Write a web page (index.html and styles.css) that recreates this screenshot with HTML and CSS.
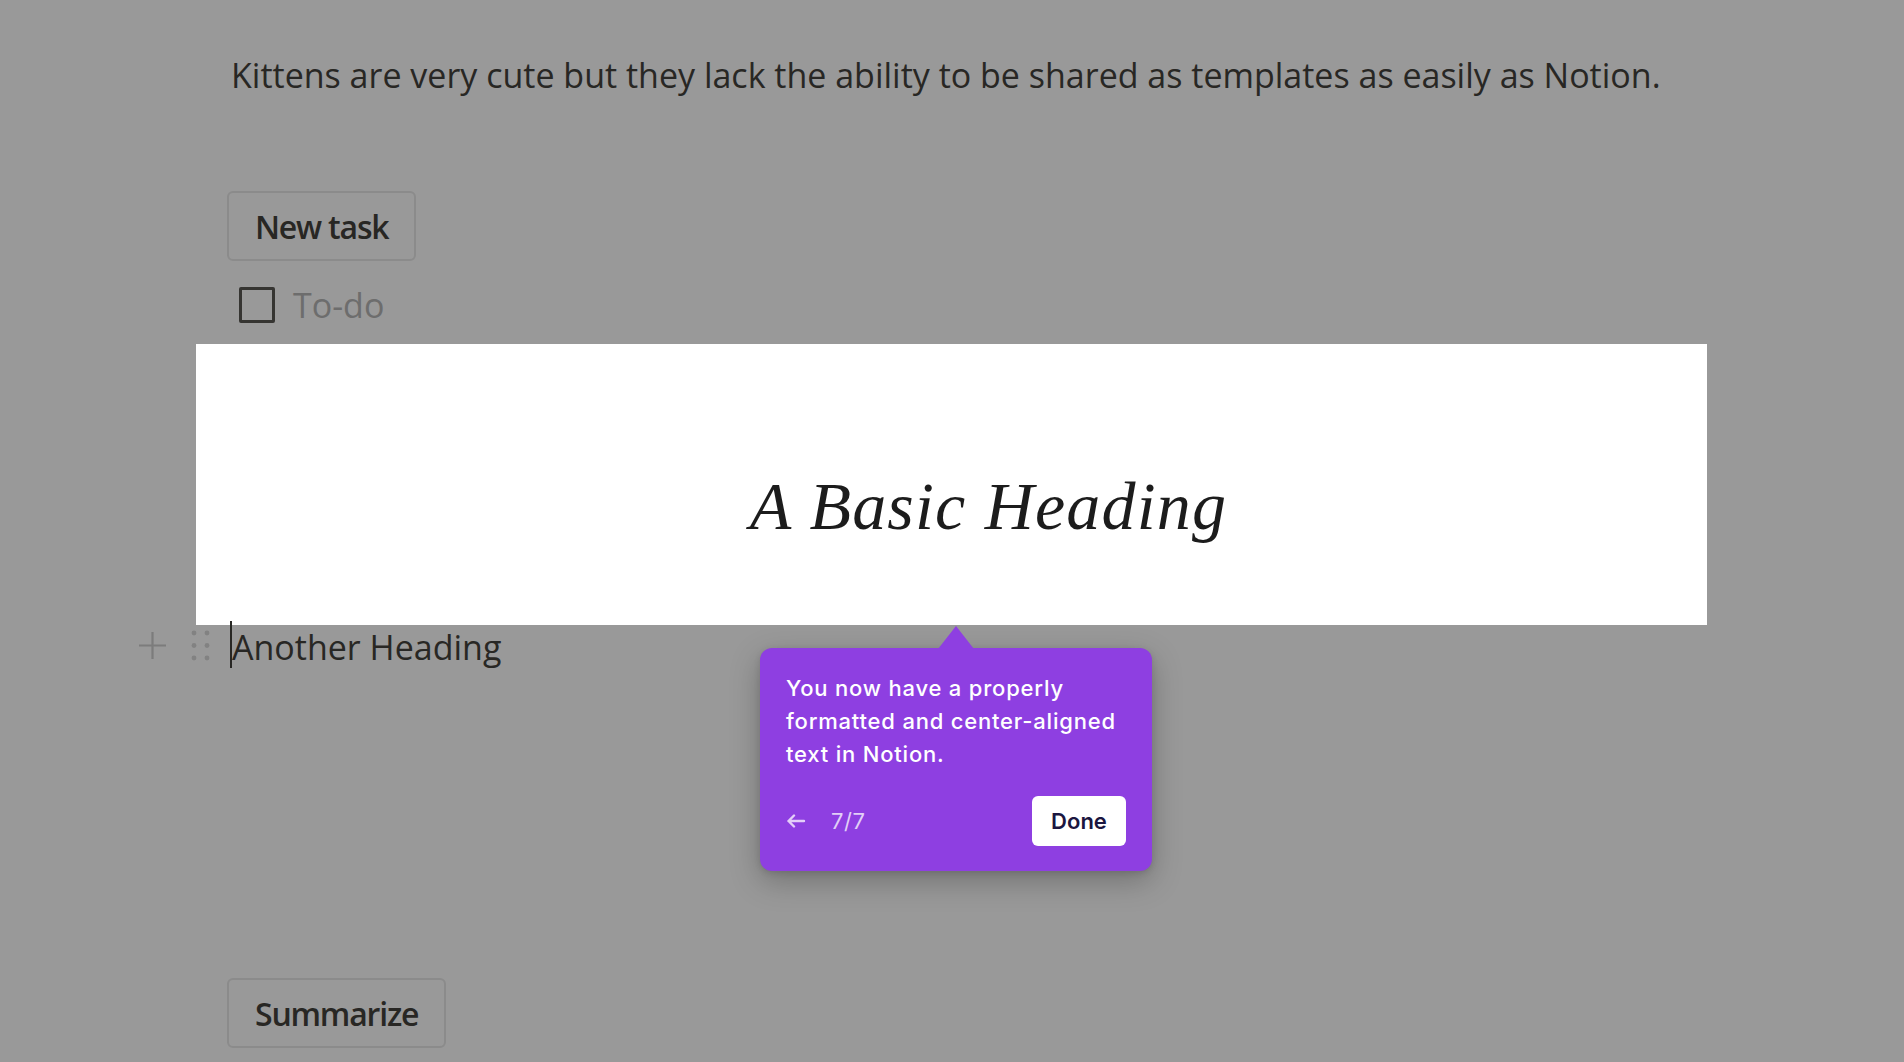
FILE: index.html
```html
<!DOCTYPE html>
<html lang="en">
<head>
<meta charset="utf-8">
<title>Notion tour</title>
<link rel="stylesheet" href="styles.css">
</head>
<body>
<div class="page">
  <div class="editor">
    <p class="intro">Kittens are very cute but they lack the ability to be shared as templates as easily as Notion.</p>
    <button class="tpl-btn new-task">New task</button>
    <div class="todo">
      <span class="check"></span>
      <span class="todo-text">To-do</span>
    </div>
    <div class="spotlight">
      <h1 class="math">A Basic Heading</h1>
    </div>
    <div class="block">
      <span class="handle plus">
        <svg width="31" height="31" viewBox="0 0 31 31"><path d="M15.5 2V29M2 15.5H29" stroke="#7c7c7c" stroke-width="2.2" fill="none"/></svg>
      </span>
      <span class="handle drag">
        <svg width="19" height="31" viewBox="0 0 19 31"><g fill="#828282"><circle cx="3" cy="3" r="2.4"/><circle cx="16" cy="3" r="2.4"/><circle cx="3" cy="15.5" r="2.4"/><circle cx="16" cy="15.5" r="2.4"/><circle cx="3" cy="28" r="2.4"/><circle cx="16" cy="28" r="2.4"/></g></svg>
      </span>
      <span class="caret"></span>
      <span class="heading-text">Another Heading</span>
    </div>
    <button class="tpl-btn summarize">Summarize</button>
  </div>

  <div class="tour">
    <p class="tour-text">You now have a properly formatted and center-aligned text in Notion.</p>
    <div class="tour-foot">
      <div class="tour-nav">
        <svg class="back" width="20" height="14" viewBox="0 0 20 14"><path d="M18 7H2.5M8 1.5L2.5 7L8 12.5" stroke="rgba(255,255,255,0.75)" stroke-width="2.4" stroke-linecap="round" stroke-linejoin="round" fill="none"/></svg>
        <span class="step">7/7</span>
      </div>
      <button class="done">Done</button>
    </div>
  </div>
</div>
</body>
</html>
```

FILE: styles.css
```css
html, body {
  margin: 0;
  padding: 0;
}

body {
  background: #999999;
  width: 1904px;
  height: 1062px;
  overflow: hidden;
}

.page {
  position: relative;
  width: 1904px;
  height: 1062px;
}

.editor {
  display: flex;
  flex-direction: column;
  align-items: flex-start;
  padding-left: 231px;
  font-family: "Open Sans", "Noto Sans", sans-serif;
  color: #282724;
}

.intro {
  margin: 51px 0 0 0;
  font-size: 34px;
  line-height: 48px;
  white-space: nowrap;
}

.tpl-btn {
  box-sizing: border-box;
  height: 70px;
  margin-left: -4px;
  padding: 0 26px;
  background: transparent;
  border: 2px solid #8b8b8b;
  border-radius: 6px;
  font-family: "Open Sans", "Noto Sans", sans-serif;
  font-size: 32px;
  font-weight: 600;
  letter-spacing: -1.2px;
  color: #282724;
}

.new-task {
  margin-top: 92px;
}

.todo {
  display: flex;
  align-items: center;
  gap: 18px;
  height: 36px;
  margin-top: 26px;
  margin-left: 8px;
}

.check {
  box-sizing: border-box;
  width: 36px;
  height: 36px;
  border: 3px solid #363532;
  border-radius: 2px;
}

.todo-text {
  font-size: 34px;
  line-height: 36px;
  color: #6d6d6d;
}

.spotlight {
  box-sizing: border-box;
  width: 1511px;
  height: 281px;
  margin-top: 21px;
  margin-left: -35px;
  padding: 128px 0 0 74px;
  background: #ffffff;
  text-align: center;
}

.math {
  margin: 0;
  font-family: "Liberation Serif", "Times New Roman", serif;
  font-style: italic;
  font-weight: normal;
  font-size: 68px;
  line-height: 68px;
  letter-spacing: 1.2px;
  color: #1c1c1c;
}

.block {
  display: flex;
  align-items: center;
  height: 45px;
  margin-left: -94px;
}

.handle {
  display: flex;
  margin-bottom: 5px;
}

.drag {
  margin-left: 23px;
}

.caret {
  width: 2px;
  height: 47px;
  margin-left: 20px;
  margin-bottom: 6px;
  background: #282724;
}

.heading-text {
  font-size: 34px;
  line-height: 45px;
  color: #282724;
}

.summarize {
  margin-top: 308px;
}

.tour {
  position: absolute;
  left: 760px;
  top: 648px;
  box-sizing: border-box;
  width: 392px;
  height: 223px;
  padding: 24px 26px 25px 26px;
  display: flex;
  flex-direction: column;
  justify-content: space-between;
  background: #8e3fe1;
  border-radius: 12px;
  box-shadow: 0 10px 30px rgba(0, 0, 0, 0.25), 0 2px 6px rgba(0, 0, 0, 0.12);
  font-family: Inter, "Noto Sans", sans-serif;
  color: #ffffff;
}

.tour::before {
  content: "";
  position: absolute;
  top: -22px;
  left: 50%;
  width: 36px;
  height: 23px;
  transform: translateX(-50%);
  background: #8e3fe1;
  clip-path: polygon(50% 0, 100% 100%, 0 100%);
}

.tour-text {
  margin: 0;
  font-size: 22px;
  font-weight: 500;
  line-height: 33px;
  letter-spacing: 0.8px;
}

.tour-foot {
  display: flex;
  align-items: center;
  justify-content: space-between;
}

.tour-nav {
  display: flex;
  align-items: center;
  gap: 25px;
}

.step {
  font-size: 22px;
  line-height: 33px;
  letter-spacing: 0.5px;
  color: rgba(255, 255, 255, 0.75);
}

.done {
  width: 94px;
  height: 50px;
  padding: 0;
  border: none;
  border-radius: 6px;
  background: #ffffff;
  font-family: Inter, "Noto Sans", sans-serif;
  font-size: 22px;
  font-weight: 600;
  color: #1b1640;
}
```
